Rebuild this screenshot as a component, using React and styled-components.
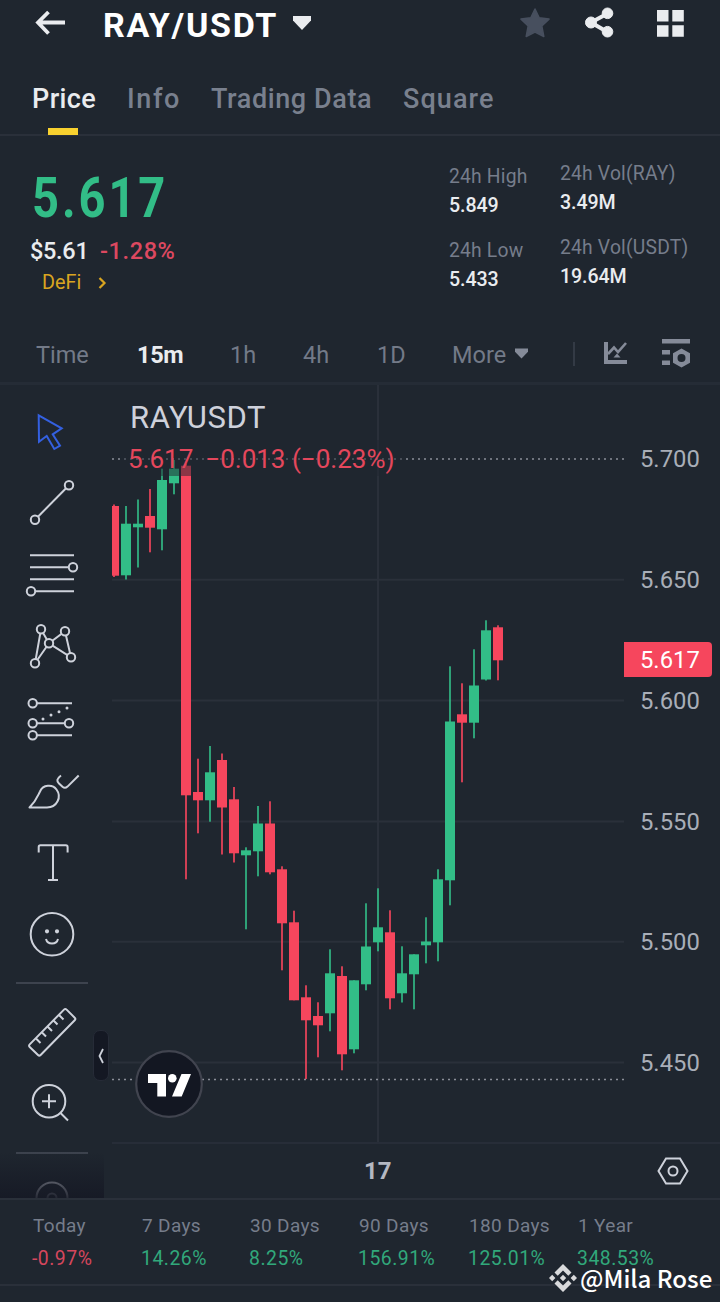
import styled, { createGlobalStyle } from "styled-components"

const GlobalStyle = createGlobalStyle`
    * {
        box-sizing: border-box;
    }

    body {
        margin: 0;
        background-color: #1f262f;
        font-family: Roboto, "Liberation Sans", sans-serif;
        color: #eaecef;
    }

    svg {
        display: block;
        flex: none;
    }
`

const ScPage = styled.div`
    position: relative;
    width: 720px;
    height: 1302px;
    overflow: hidden;
    background-color: #1f262f;
`

const ScHeader = styled.header`
    display: flex;
    align-items: center;
    height: 46px;
    padding: 0 36px 0 35px;

    h1 {
        margin: 0 16px 0 37px;
        width: 174px;
        font-size: 34px;
        line-height: 46px;
        font-weight: 700;
        letter-spacing: 1.7px;
        color: #fff;
        white-space: nowrap;
        padding-top: 3px;
    }
`

const ScActions = styled.div`
    display: flex;
    align-items: center;
    margin-left: auto;

    svg + svg {
        margin-left: 34px;
    }

    svg:last-child {
        margin-left: 43px;
    }
`

const ScTabs = styled.nav`
    display: grid;
    grid-template-columns: 95px 84px 192px 1fr;
    height: 90px;
    padding-left: 32px;
    border-bottom: 2px solid #2a303a;
`

const ScTab = styled.div`
    padding-top: 37px;
    font-size: 27px;
    line-height: 32px;
    font-weight: 500;
    letter-spacing: ${({ $spacing }) => $spacing || 0}px;
    color: ${({ $active }) => $active ? "#eaecef" : "#79808e"};
    white-space: nowrap;

    &::after {
        display: block;
        content: "";
        width: 30px;
        height: 7px;
        margin: 13px 0 0 16px;
        background-color: ${({ $active }) => $active ? "#f8d12f" : "transparent"};
    }
`

const ScSummary = styled.section`
    display: grid;
    grid-template-columns: 417px 111px 1fr;
    height: 193px;
    padding-left: 32px;
`

const ScQuote = styled.div`
    padding-top: 36px;

    .last {
        height: 52px;
        font-size: 56px;
        line-height: 52px;
        font-weight: 700;
        letter-spacing: 3.5px;
        color: #32bd87;
        transform: scaleX(.84);
        transform-origin: 0 0;
    }

    .change {
        display: grid;
        grid-template-columns: 70px 1fr;
        margin: 13px 0 0 -2px;
        font-size: 23.5px;
        line-height: 28px;
        font-weight: 500;
        letter-spacing: -0.3px;
    }

    .change em {
        font-style: normal;
        letter-spacing: 0.6px;
        color: #dc4860;
    }

    .sector {
        display: flex;
        align-items: center;
        gap: 17px;
        margin: 6px 0 0 10px;
        font-size: 19.8px;
        line-height: 24px;
        color: #d9a520;
    }
`

const ScStats = styled.div`
    padding-top: ${({ $top }) => $top}px;
`

const ScStat = styled.div`
    height: 74px;
    white-space: nowrap;

    span {
        display: block;
        font-size: 19.3px;
        line-height: 26px;
        letter-spacing: 0.2px;
        color: #767d8b;
    }

    b {
        display: block;
        margin-top: 3px;
        font-size: 19.6px;
        line-height: 26px;
        font-weight: 500;
        letter-spacing: -0.1px;
    }
`

const ScIntervals = styled.div`
    display: grid;
    grid-template-columns: 101px 93px 73px 74px 75px 121px 31px 58px 1fr;
    align-items: center;
    height: 56px;
    padding: 0 0 3px 36px;
    border-bottom: 3px solid #252c36;
`

const ScInterval = styled.div`
    display: flex;
    align-items: center;
    gap: 9px;
    padding-top: 1px;
    font-size: 23.5px;
    line-height: 28px;
    font-weight: ${({ $active }) => $active ? 700 : 400};
    letter-spacing: ${({ $active }) => $active ? -0.3 : 0}px;
    color: ${({ $active }) => $active ? "#eaecef" : "#737a88"};

    svg {
        margin-top: -3px;
    }
`

const ScSeparator = styled.div`
    width: 2px;
    height: 24px;
    background-color: #333a45;
`

const ScChart = styled.main`
    position: relative;
    display: grid;
    grid-template-columns: 104px 8px 512px 96px;
    grid-template-rows: 757px 56px;
    height: 813px;
`

const ScTools = styled.aside`
    position: relative;
    grid-row: 1 / 3;
    display: flex;
    flex-direction: column;
    align-items: flex-start;
    padding: 11px 16px 0;
    overflow: hidden;

    svg {
        fill: none;
        stroke: #ced2db;
        stroke-width: 2;
    }

    &::after {
        position: absolute;
        left: 0;
        right: 0;
        bottom: 0;
        height: 46px;
        content: "";
        background: linear-gradient(rgba(21, 24, 36, 0), rgba(21, 24, 36, .85));
    }
`

const ScRule = styled.div`
    width: 72px;
    height: 2px;
    margin: ${({ $above }) => $above}px 0 ${({ $below }) => $below}px;
    flex: none;
    background-color: #3d434e;
`

const ScCollapse = styled.div`
    position: absolute;
    left: 93px;
    top: 645px;
    width: 16px;
    height: 51px;
    display: flex;
    align-items: center;
    justify-content: center;
    border: 1px solid #262b37;
    border-radius: 7px;
    background-color: #141823;
`

const ScPlot = styled.div`
    grid-column: 3;
`

const ScLegend = styled.div`
    position: absolute;
    left: 124px;
    top: 14px;

    .symbol {
        padding-left: 6px;
        font-size: 31px;
        line-height: 37px;
        letter-spacing: 0.6px;
        color: #ced1db;
    }

    .values {
        margin-top: 4px;
        width: 280px;
        height: 36px;
        padding-left: 4px;
        font-size: 26px;
        line-height: 38px;
        white-space: nowrap;
        color: #e4475c;
        background-color: rgba(31, 38, 47, .5);
    }

    .values span {
        margin-left: 12px;
    }
`

const ScLogo = styled.div`
    position: absolute;
    left: 135px;
    top: 665px;
`

const ScPrices = styled.div`
    display: grid;
    grid-auto-rows: 120.8px;
    align-items: center;
    grid-column: 4;
    height: 757px;
    margin-top: 13.8px;
    padding-left: 16px;
    font-size: 23.8px;
    color: #a9aeb8;
`

const ScLastPrice = styled.div`
    position: absolute;
    left: 624px;
    top: 257px;
    width: 88px;
    height: 35px;
    padding-left: 16px;
    border-radius: 0 4px 4px 0;
    font-size: 23.8px;
    line-height: 36px;
    color: #fff;
    background-color: #f6465d;
`

const ScTimeAxis = styled.div`
    grid-column: 3 / 5;
    display: flex;
    align-items: center;
    justify-content: space-between;
    padding: 0 31px 0 252px;
    border-top: 2px solid #272d38;
    font-size: 24px;
    font-weight: 700;
    color: #b4b8c2;
`

const ScReturns = styled.footer`
    display: grid;
    grid-template-columns: 109px 108px 109px 110px 109px 1fr;
    height: 88px;
    padding: 13px 0 0 33px;
    border-top: 2px solid #2a303a;
    border-bottom: 2px solid #2a303a;
    white-space: nowrap;
`

const ScReturn = styled.div`
    font-size: 19px;
    line-height: 26px;
    letter-spacing: 0.35px;
    color: #767d8b;

    b {
        display: block;
        margin: 7px 0 0 -1px;
        font-weight: 400;
        font-size: 19.4px;
        letter-spacing: 0.5px;
        color: ${({ $down }) => $down ? "#d5475d" : "#31a87b"};
    }
`

const ScAuthor = styled.div`
    position: absolute;
    left: 549px;
    top: 1261px;
    display: flex;
    align-items: center;
    gap: 3px;
    font-family: "Noto Sans CJK SC", "Noto Sans", sans-serif;
    font-size: 24.1px;
    line-height: 33px;
    font-weight: 500;
    color: #fff;
    white-space: nowrap;
`

const tabs = [["Price", 0.4], ["Info", 1.6], ["Trading Data", 0.6], ["Square", 1.1]]

const intervals = ["Time", "15m", "1h", "4h", "1D"]

const prices = ["5.700", "5.650", "5.600", "5.550", "5.500", "5.450"]

const returns = [
    ["Today", "-0.97%"],
    ["7 Days", "14.26%"],
    ["30 Days", "8.25%"],
    ["90 Days", "156.91%"],
    ["180 Days", "125.01%"],
    ["1 Year", "348.53%"],
]

// up?, high, body top, body bottom, low
const candles = [
    [0, 504.5, 506, 575.7, 577],
    [1, 506, 523.7, 575.3, 579.5],
    [1, 499.5, 523.7, 527.3, 567.5],
    [0, 489, 516, 527.7, 552.3],
    [1, 468.7, 480, 529.3, 550.3],
    [1, 460, 468.7, 483.3, 494.3],
    [0, 464, 465.7, 795.3, 879.3],
    [0, 758.7, 792, 800.3, 833.3],
    [1, 746, 772.3, 800.3, 821.7],
    [0, 753.5, 760, 807.5, 854.5],
    [0, 787, 799.3, 853.3, 862.5],
    [1, 847.3, 850.3, 855.3, 929.3],
    [1, 806, 823.5, 851.3, 876.3],
    [0, 801.3, 823.5, 872.3, 874.3],
    [0, 866.3, 869.3, 923.3, 970.3],
    [0, 910.7, 922.3, 1000.3, 1000.3],
    [0, 985.3, 997.3, 1020.3, 1079],
    [0, 1002.3, 1016, 1025.3, 1057.3],
    [1, 949.3, 973.3, 1013.3, 1031.3],
    [0, 966.3, 976, 1054.3, 1070.3],
    [1, 980.3, 980.3, 1049.3, 1053.3],
    [1, 903.3, 946.5, 984.3, 990.3],
    [1, 888.3, 927.3, 942.3, 951.3],
    [0, 910.3, 932.3, 998.3, 1009.3],
    [1, 946.3, 973.3, 993.3, 1002.5],
    [1, 954.3, 954.3, 974.3, 1009.3],
    [1, 917.3, 941.5, 945.3, 963.3],
    [1, 869.3, 879.3, 942.3, 961.3],
    [1, 666.3, 721.5, 880.3, 905.3],
    [0, 683.3, 714.3, 722.7, 782.3],
    [1, 649.3, 685.5, 722.7, 738.3],
    [1, 620.3, 630.3, 679.5, 680.5],
    [0, 625.3, 627.3, 660.3, 680.3],
]

const Caret = ({ width, height, color }) => (
    <svg width={width} height={height} viewBox="0 0 18 14">
        <path d="M0 0h18v4.500l-9 9.500-9-9.500z" fill={color} />
    </svg>
)

const Tool = ({ children }) => <svg width="72" height="72" viewBox="0 0 72 72">{children}</svg>

const Ring = ({ x, y }) => <circle cx={x} cy={y} r="4.2" fill="#1f262f" />

function Header() {
    return (
        <ScHeader>
            <svg width="31" height="26" viewBox="0 0 31 26" fill="none" stroke="#eaecef" strokeWidth="3.800">
                <path d="M13.500 2L3 12.500l10.500 11M3 12.500h27" />
            </svg>
            <h1>RAY/USDT</h1>
            <Caret width={18} height={14} color="#eaecef" />
            <ScActions>
                <svg width="30" height="30" viewBox="0 0 30 30">
                    <path d="M15 1l4.200 8.800 9.800 1.300-7.200 6.800 2 10.600L15 24l-8.800 4.500 2-10.600L1 11.100l9.800-1.300z" fill="#474f5e" stroke="#474f5e" strokeWidth="1.500" strokeLinejoin="round" />
                </svg>
                <svg width="30" height="32" viewBox="0 0 30 32" fill="#eaecef" stroke="#eaecef">
                    <path d="M23.500 6.500L7 15.500l16.500 9.500" fill="none" strokeWidth="4" />
                    <circle cx="7" cy="15.500" r="5.500" />
                    <circle cx="23.500" cy="6.300" r="5.300" />
                    <circle cx="23.500" cy="24.700" r="5.300" />
                </svg>
                <svg width="27" height="27" viewBox="0 0 27 27" fill="#eaecef">
                    <path d="M0 0h11.500v11.500H0zM15.300 0h11.500v11.500H15.300zM0 15.300h11.500v11.500H0zM15.300 15.300h11.500v11.500H15.300z" />
                </svg>
            </ScActions>
        </ScHeader>
    )
}

function Summary() {
    return (
        <ScSummary>
            <ScQuote>
                <div className="last">5.617</div>
                <div className="change"><span>$5.61</span><em>-1.28%</em></div>
                <div className="sector">
                    DeFi
                    <svg width="9" height="12" viewBox="0 0 9 12" fill="none" stroke="#d9a520" strokeWidth="2.200">
                        <path d="M1.500 1l5 5-5 5" />
                    </svg>
                </div>
            </ScQuote>
            <ScStats $top={28}>
                <ScStat><span>24h High</span><b>5.849</b></ScStat>
                <ScStat><span>24h Low</span><b>5.433</b></ScStat>
            </ScStats>
            <ScStats $top={25}>
                <ScStat><span>24h Vol(RAY)</span><b>3.49M</b></ScStat>
                <ScStat><span>24h Vol(USDT)</span><b>19.64M</b></ScStat>
            </ScStats>
        </ScSummary>
    )
}

function Intervals() {
    return (
        <ScIntervals>
            {intervals.map(name => <ScInterval key={name} $active={name === "15m"}>{name}</ScInterval>)}
            <ScInterval>More <Caret width={13} height={11} color="#858b99" /></ScInterval>
            <ScSeparator />
            <svg width="23" height="26" viewBox="0 0 23 26" fill="none" stroke="#858b99">
                <path d="M2 1v20h21" strokeWidth="4" />
                <path d="M4 13l6-6.500 4 4.500 8-9" strokeWidth="2.600" />
                <path d="M9.500 16.500l3.500-4 3.500 4z" fill="#858b99" stroke="none" />
            </svg>
            <svg width="29" height="32" viewBox="0 0 29 32" fill="#858b99">
                <path d="M0 1h28v4.500H0zM0 12h8v4.500H0zM0 22.500h8V27H0z" />
                <path d="M19.500 10.500l8.500 4.700v9.600l-8.500 4.700-8.500-4.700v-9.600zM19.500 16a4 4 0 100 8 4 4 0 000-8z" fillRule="evenodd" />
            </svg>
        </ScIntervals>
    )
}

function Tools() {
    return (
        <ScTools>
            <Tool>
                <path d="M22.700 19.300L45.700 32.300 36.700 38.300 44 49.700 38.300 53 30.700 40 23 45.700z" stroke="#3460e0" />
            </Tool>
            <Tool>
                <path d="M53 17.300L19 51.700" />
                <Ring x={53} y={17.3} />
                <Ring x={19} y={51.7} />
            </Tool>
            <Tool>
                <path d="M14 15.300h44M14 27.300h44M14 39.300h44M14 51.300h44" />
                <Ring x={57} y={27.3} />
                <Ring x={15} y={51.3} />
            </Tool>
            <Tool>
                <path d="M19 51.300L25 17.300 33 31.300 49 19.300 55 45.300 33 31.300z" />
                <Ring x={25} y={17.3} />
                <Ring x={49} y={19.3} />
                <Ring x={33} y={31.3} />
                <Ring x={55} y={45.3} />
                <Ring x={19} y={51.3} />
            </Tool>
            <Tool>
                <path d="M17 19.300h39M17 39.300h36M17 51.300h39" />
                <path d="M27 35v.01M35 31v.01M43 27.700v.01M51 24v.01" strokeWidth="3" strokeLinecap="round" />
                <Ring x={16.7} y={19.3} />
                <Ring x={16.7} y={39.3} />
                <Ring x={53} y={39.3} />
                <Ring x={16.7} y={51.3} />
            </Tool>
            <Tool>
                <path d="M13.500 51.500C20 45 21.500 40.500 24 35.500 27 28.500 36.500 28 40.500 33.500 46 41 41 51.500 31 51.500z" strokeLinejoin="round" />
                <path d="M45 19.500c-4.500 3.500-4.500 5.500-2 8l3.500 3.300c1.500 1.300 3.500 1.200 5-.2L62.700 19.500" />
            </Tool>
            <Tool>
                <path d="M22.700 24.500v-5.500q0-1.700 1.700-1.700h25.500q1.700 0 1.700 1.700v5.500M37 17.300V52M32 52h10" />
            </Tool>
            <Tool>
                <circle cx="36" cy="34.300" r="21.300" />
                <path d="M30 39c1.500 6 10.500 6 12 0" />
                <path d="M31 31.300v.01M41 31.300v.01" strokeWidth="4.200" strokeLinecap="round" />
            </Tool>
            <ScRule $above={10} $below={12} />
            <Tool>
                <path d="M48 13.600q1.300-1.300 2.600 0l8.100 8.100q1.300 1.300 0 2.600L24.600 59q-1.300 1.300-2.600 0L13.700 51q-1.300-1.300 0-2.600z" />
                <path d="M20 42.500l4.500 4.500M26 36.500l4 4M31.500 30.500l4.500 4.500M37.500 24.500l4 4M43 19l4.500 4.500" />
            </Tool>
            <Tool>
                <circle cx="33" cy="33.300" r="16.300" />
                <path d="M33 26.300v14M26 33.300h14M44.500 45l7.500 7.500" />
            </Tool>
            <ScRule $above={12} $below={12} />
            <svg width="72" height="34" viewBox="0 0 72 34">
                <circle cx="36" cy="32" r="15.500" stroke="#a4a8b1" />
                <circle cx="36" cy="32" r="4.500" stroke="#7b7f8a" />
            </svg>
        </ScTools>
    )
}

function Plot() {
    return (
        <ScPlot>
            <svg width="512" height="757" viewBox="112 385 512 757">
                <path d="M112 579.700h512M112 700.500h512M112 821.500h512M112 941.700h512M112 1062.500h512M378 385v757" stroke="#2a303a" strokeWidth="2" />
                <path d="M112 459h512M112 1079.500h512" stroke="#8b8f99" strokeWidth="1.500" strokeDasharray="2 4" />
                {candles.map(([up, high, top, bottom, low], i) => {
                    const x = 114 + i * 12
                    return (
                        <g key={x} fill={up ? "#32bd87" : "#f6465d"}>
                            <rect x={x - 1} y={high} width="2" height={low - high} opacity=".82" />
                            <rect x={x - 5} y={top} width="10" height={bottom - top} />
                        </g>
                    )
                })}
            </svg>
        </ScPlot>
    )
}

function Chart() {
    return (
        <ScChart>
            <Tools />
            <Plot />
            <ScPrices>
                {prices.map(price => <div key={price}>{price}</div>)}
            </ScPrices>
            <ScTimeAxis>
                17
                <svg width="32" height="28" viewBox="0 0 32 28" fill="none" stroke="#ced2db" strokeWidth="2">
                    <path d="M9 1.500h14L30.500 14 23 26.500H9L1.500 14z" />
                    <circle cx="16" cy="14" r="4.500" />
                </svg>
            </ScTimeAxis>
            <ScLegend>
                <div className="symbol">RAYUSDT</div>
                <div className="values">5.617<span>−0.013 (−0.23%)</span></div>
            </ScLegend>
            <ScLastPrice>5.617</ScLastPrice>
            <ScLogo>
                <svg width="68" height="68" viewBox="0 0 68 68">
                    <circle cx="34" cy="34" r="32.800" fill="#131722" stroke="#41444f" strokeWidth="2.200" />
                    <path d="M13 24h18v22.500h-8.700v-13.500H13zM46.500 24H56l-9.300 22.500H37z" fill="#fff" />
                    <circle cx="37.300" cy="28.200" r="4.300" fill="#fff" />
                </svg>
            </ScLogo>
            <ScCollapse>
                <svg width="6" height="16" viewBox="0 0 6 16" fill="none" stroke="#ced2db" strokeWidth="1.800">
                    <path d="M5 1L1.500 8 5 15" />
                </svg>
            </ScCollapse>
        </ScChart>
    )
}

function App() {
    return (
        <ScPage>
            <GlobalStyle />
            <Header />
            <ScTabs>
                {tabs.map(([name, spacing]) =>
                    <ScTab key={name} $active={name === "Price"} $spacing={spacing}>{name}</ScTab>,
                )}
            </ScTabs>
            <Summary />
            <Intervals />
            <Chart />
            <ScReturns>
                {returns.map(([period, value]) =>
                    <ScReturn key={period} $down={value.startsWith("-")}>{period}<b>{value}</b></ScReturn>,
                )}
            </ScReturns>
            <ScAuthor>
                <svg width="28" height="28" viewBox="0 0 28 28" fill="#d9dadc">
                    <path d="M14 0l8.500 8.500-3.200 3.200L14 6.400l-5.300 5.300-3.200-3.200zM14 28l8.500-8.500-3.200-3.200L14 21.600l-5.300-5.300-3.200 3.200zM3.200 10.800L6.400 14l-3.200 3.200L0 14zM24.800 10.800L28 14l-3.200 3.200-3.200-3.200zM14 10.800l3.200 3.200-3.200 3.200-3.200-3.200z" />
                </svg>
                @Mila Rose
            </ScAuthor>
        </ScPage>
    )
}

export default App
